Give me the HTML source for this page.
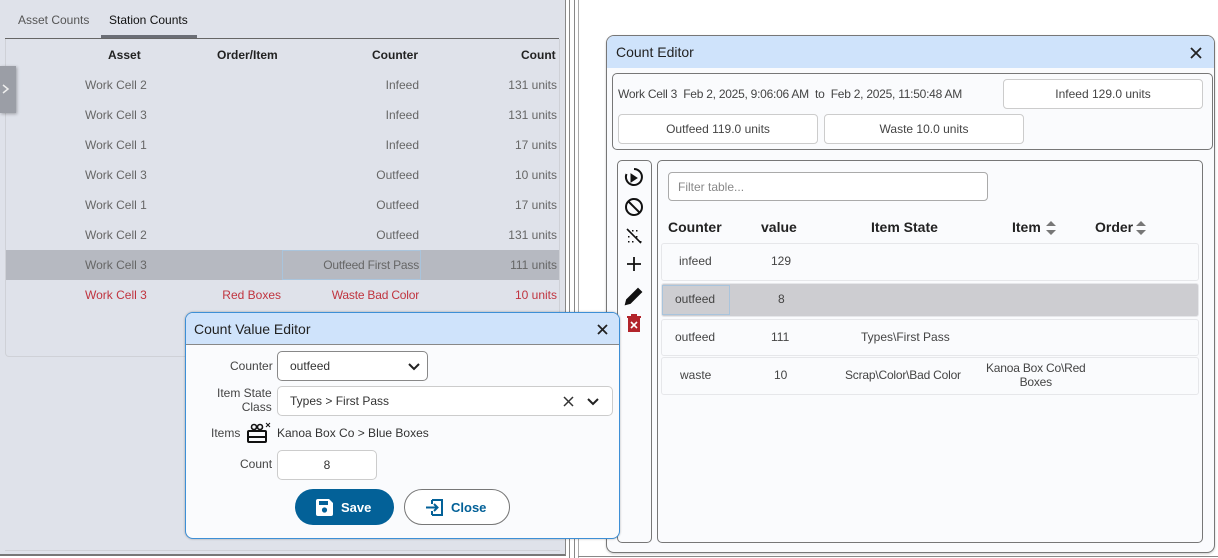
<!DOCTYPE html>
<html><head><style>
*{box-sizing:border-box;margin:0;padding:0}
body{width:1218px;height:558px;overflow:hidden;background:#fff;font-family:"Liberation Sans",sans-serif;font-size:12px;color:#444;position:relative}
.abs{position:absolute}
.left{left:0;top:0;width:566px;height:556px;background:#dfe2ea;border-right:1px solid #888;border-bottom:2px solid #777}
.tab{position:absolute;top:13px;font-size:12px}
.t{position:absolute;white-space:nowrap}
.r{position:absolute;white-space:nowrap;text-align:right}
.row{position:absolute;left:6px;width:553px;height:30px}
.hd{font-weight:bold;color:#222}
.dlg{position:absolute;background:#fafbfd;border-radius:8px;overflow:hidden}
.dh{position:absolute;left:0;right:0;top:0;background:#cfe3fb;font-size:14px;color:#222}
.box{position:absolute;border:1px solid #ccc;border-radius:4px;background:#fff}
.rrow{position:absolute;left:661px;width:538px;border:1px solid #e6e7ea;border-radius:3px;background:#fafbfd}
</style></head><body>
<div class="abs left">
 <div class="tab" style="left:18px;color:#555">Asset Counts</div>
 <div class="tab" style="left:109px;color:#111">Station Counts</div>
 <div class="abs" style="left:101px;top:35px;width:96px;height:3px;background:#6b6e76"></div>
 <div class="abs" style="left:5px;top:38px;width:554px;height:1px;background:#666"></div>
 <div class="abs" style="left:5px;top:39px;width:555px;height:318px;border:1px solid #cfd1d7;border-top:none;border-radius:0 0 4px 4px"></div>
 <div class="abs" style="left:5px;top:550px;width:555px;height:2px;border-top:1px solid #cfd1d7"></div>
 <div class="t hd" style="left:108px;top:48px">Asset</div>
 <div class="t hd" style="left:217px;top:48px">Order/Item</div>
 <div class="t hd" style="left:372px;top:48px">Counter</div>
 <div class="t hd" style="left:521px;top:48px">Count</div>
 <div class="abs" style="left:0;top:66px;width:16px;height:47px;background:#9b9ea6;box-shadow:1px 1px 3px rgba(0,0,0,.3)"><svg width="16" height="47"><path d="M3 19l5 4-5 4" stroke="#eee" stroke-width="1.5" fill="none"/></svg></div>
 <div class="row" style="top:250px;background:#b6b9c1"></div>
 <div class="abs" style="left:282px;top:250px;width:139px;height:30px;border:1px solid #a9c4dc"></div>
 <div style="color:#666">
 <div class="t" style="left:85px;top:78px">Work Cell 2</div><div class="r" style="right:146px;top:78px">Infeed</div><div class="r" style="right:8px;top:78px">131 units</div>
 <div class="t" style="left:85px;top:108px">Work Cell 3</div><div class="r" style="right:146px;top:108px">Infeed</div><div class="r" style="right:8px;top:108px">131 units</div>
 <div class="t" style="left:85px;top:138px">Work Cell 1</div><div class="r" style="right:146px;top:138px">Infeed</div><div class="r" style="right:8px;top:138px">17 units</div>
 <div class="t" style="left:85px;top:168px">Work Cell 3</div><div class="r" style="right:146px;top:168px">Outfeed</div><div class="r" style="right:8px;top:168px">10 units</div>
 <div class="t" style="left:85px;top:198px">Work Cell 1</div><div class="r" style="right:146px;top:198px">Outfeed</div><div class="r" style="right:8px;top:198px">17 units</div>
 <div class="t" style="left:85px;top:228px">Work Cell 2</div><div class="r" style="right:146px;top:228px">Outfeed</div><div class="r" style="right:8px;top:228px">131 units</div>
 <div class="t" style="left:85px;top:258px">Work Cell 3</div><div class="r" style="right:146px;top:258px;letter-spacing:-0.2px">Outfeed First Pass</div><div class="r" style="right:8px;top:258px">111 units</div>
 </div>
 <div style="color:#c0343f">
 <div class="t" style="left:85px;top:288px">Work Cell 3</div><div class="r" style="right:284px;top:288px">Red Boxes</div><div class="r" style="right:146px;top:288px;letter-spacing:-0.2px">Waste Bad Color</div><div class="r" style="right:8px;top:288px">10 units</div>
 </div>
</div>
<div class="abs" style="left:569px;top:0;width:1px;height:558px;background:#888"></div>
<div class="abs" style="left:574px;top:0;width:1px;height:558px;background:#888"></div>
<div class="abs" style="left:578px;top:0;width:1px;height:558px;background:#aaa"></div>
<div class="abs" style="left:578px;top:556px;width:640px;height:1px;background:#888"></div>

<div class="dlg" style="left:606px;top:35px;width:609px;height:518px;border:1px solid #777;box-shadow:0 1px 2px rgba(0,0,0,.2)">
 <div class="dh" style="height:32px"><span class="t" style="left:9px;top:8px">Count Editor</span>
 <svg class="abs" style="left:582px;top:10px" width="14" height="14"><path d="M2 2l10 10M12 2L2 12" stroke="#222" stroke-width="1.8"/></svg></div>
 <div class="abs" style="left:5px;top:37px;width:601px;height:77px;border:1px solid #777;border-radius:5px;background:#fafbfd"></div>
 <div class="t" style="left:11px;top:51px;color:#444;letter-spacing:-0.25px">Work Cell 3&nbsp; Feb 2, 2025, 9:06:06 AM&nbsp; to&nbsp; Feb 2, 2025, 11:50:48 AM</div>
 <div class="box" style="left:396px;top:43px;width:200px;height:30px;text-align:center;line-height:28px">Infeed 129.0 units</div>
 <div class="box" style="left:11px;top:78px;width:200px;height:30px;text-align:center;line-height:28px">Outfeed 119.0 units</div>
 <div class="box" style="left:217px;top:78px;width:200px;height:30px;text-align:center;line-height:28px">Waste 10.0 units</div>
 <div class="abs" style="left:10px;top:124px;width:35px;height:383px;border:1px solid #777;border-radius:5px"></div>
 <div class="abs" style="left:50px;top:124px;width:546px;height:383px;border:1px solid #777;border-radius:5px"></div>
</div>
<svg class="abs" style="left:620px;top:165px" width="28" height="170">
 <g fill="none" stroke="#111" stroke-width="2">
 <path d="M14 4a8 8 0 1 1-7.5 5"/><path d="M11 9v8l6-4z" fill="#111" stroke-width="1"/>
 <circle cx="14" cy="42" r="8"/><path d="M8.5 36.5l11 11"/>
 <path d="M7 64l14 14" stroke-width="1.6"/>
 <path d="M14 92v14M7 99h14" stroke-width="1.8"/>
 <path d="M7 135l11-11 3 3-11 11-4 1z" fill="#111"/>
 </g>
 <g fill="#111"><rect x="8" y="65" width="1.5" height="1.5"/><rect x="12" y="65" width="1.5" height="1.5"/><rect x="16" y="65" width="1.5" height="1.5"/><rect x="8" y="71" width="1.5" height="1.5"/><rect x="16" y="71" width="1.5" height="1.5"/><rect x="8" y="76" width="1.5" height="1.5"/><rect x="12" y="76" width="1.5" height="1.5"/><rect x="20" y="76" width="1.5" height="1.5"/></g>
 <rect x="8" y="153" width="12" height="14" fill="#b2242b"/><rect x="7" y="151" width="14" height="2" fill="#b2242b"/><rect x="11" y="149" width="6" height="2" fill="#b2242b"/>
 <path d="M11 157l6 6M17 157l-6 6" stroke="#fff" stroke-width="1.6"/>
</svg>
<div class="abs" style="left:668px;top:172px;width:320px;height:29px;border:1px solid #aaa;border-radius:4px;background:#fff"><span class="t" style="left:9px;top:7px;color:#888">Filter table...</span></div>
<div style="font-size:14px;font-weight:bold;color:#222">
 <div class="t" style="left:668px;top:219px">Counter</div>
 <div class="t" style="left:761px;top:219px">value</div>
 <div class="t" style="left:871px;top:219px">Item State</div>
 <div class="t" style="left:1012px;top:219px">Item</div>
 <div class="t" style="left:1095px;top:219px">Order</div>
</div>
<svg class="abs" style="left:1045px;top:219px" width="12" height="18"><path d="M1 7l5-5 5 5zM1 11l5 5 5-5z" fill="#777"/></svg>
<svg class="abs" style="left:1135px;top:219px" width="12" height="18"><path d="M1 7l5-5 5 5zM1 11l5 5 5-5z" fill="#777"/></svg>
<div class="rrow" style="top:243px;height:38px"></div>
<div class="rrow" style="top:283px;height:34px;background:#cdcdd1;border-color:#e6e7ea"></div>
<div class="abs" style="left:662px;top:285px;width:68px;height:30px;border:1px solid #a9c4dc"></div>
<div class="rrow" style="top:319px;height:37px"></div>
<div class="rrow" style="top:357px;height:38px"></div>
<div style="color:#444">
 <div class="t" style="left:679px;top:254px">infeed</div><div class="t" style="left:771px;top:254px">129</div>
 <div class="t" style="left:675px;top:292px">outfeed</div><div class="t" style="left:778px;top:292px">8</div>
 <div class="t" style="left:675px;top:330px">outfeed</div><div class="t" style="left:771px;top:330px">111</div><div class="t" style="left:861px;top:330px">Types\First Pass</div>
 <div class="t" style="left:845px;top:368px;letter-spacing:-0.2px">Scrap\Color\Bad Color</div><div class="t" style="left:680px;top:368px">waste</div><div class="t" style="left:774px;top:368px">10</div>
 <div class="t" style="left:986px;top:361px;text-align:center;line-height:14px;letter-spacing:-0.2px">Kanoa Box Co\Red<br>Boxes</div>
</div>

<div class="dlg" style="left:185px;top:312px;width:435px;height:227px;border:1px solid #3d8fd6;box-shadow:0 0 2px rgba(0,0,0,.3)">
 <div class="dh" style="height:32px;border-bottom:1px solid #888"><span class="t" style="left:8px;top:8px">Count Value Editor</span>
 <svg class="abs" style="left:410px;top:10px" width="13" height="13"><path d="M2 2l9 9M11 2l-9 9" stroke="#222" stroke-width="1.8"/></svg></div>
 <div class="t" style="left:44px;top:46px">Counter</div>
 <div class="box" style="left:91px;top:38px;width:151px;height:30px;border-color:#888;border-radius:5px"><span class="t" style="left:12px;top:7px;color:#333">outfeed</span>
 <svg class="abs" style="left:130px;top:10px" width="12" height="9"><path d="M1 2l5 5 5-5" stroke="#222" stroke-width="2" fill="none"/></svg></div>
 <div class="t" style="left:31px;top:73px;text-align:right;line-height:14px">Item State<br>&nbsp;&nbsp;&nbsp;&nbsp;Class</div>
 <div class="box" style="left:91px;top:73px;width:336px;height:30px;border-radius:5px"><span class="t" style="left:12px;top:7px;color:#333">Types &gt; First Pass</span>
 <svg class="abs" style="left:284px;top:9px" width="40" height="12"><path d="M2 1l9 9M11 1l-9 9" stroke="#333" stroke-width="1.5"/><path d="M26 3l5 5 5-5" stroke="#222" stroke-width="2" fill="none"/></svg></div>
 <div class="t" style="left:25px;top:113px">Items</div>
 <svg class="abs" style="left:60px;top:109px" width="26" height="22"><rect x="2" y="9" width="18" height="11" rx="1" fill="none" stroke="#111" stroke-width="2"/><path d="M2 15h18" stroke="#111" stroke-width="2"/><circle cx="8" cy="5" r="2.5" fill="none" stroke="#111" stroke-width="1.6"/><circle cx="14" cy="5" r="2.5" fill="none" stroke="#111" stroke-width="1.6"/><path d="M20 1l4 4M24 1l-4 4" stroke="#111" stroke-width="1"/></svg>
 <div class="t" style="left:91px;top:113px;color:#333">Kanoa Box Co &gt; Blue Boxes</div>
 <div class="t" style="left:54px;top:144px">Count</div>
 <div class="box" style="left:91px;top:137px;width:100px;height:30px;border-radius:5px;text-align:center;line-height:28px;color:#333">8</div>
 <div class="abs" style="left:109px;top:176px;width:99px;height:36px;background:#036198;border-radius:18px;color:#fff;font-weight:bold;font-size:13px">
  <svg class="abs" style="left:21px;top:10px" width="18" height="17"><path d="M0 2a2 2 0 0 1 2-2h11l4 4v11a2 2 0 0 1-2 2H2a2 2 0 0 1-2-2z" fill="#fff"/><rect x="3" y="2" width="9" height="4" fill="#036198"/><circle cx="8.5" cy="11" r="2.6" fill="#036198"/></svg>
  <span class="t" style="left:46px;top:11px">Save</span></div>
 <div class="abs" style="left:218px;top:176px;width:106px;height:36px;border:1px solid #777;border-radius:18px;color:#036198;font-weight:bold;font-size:13px;background:#fff">
  <svg class="abs" style="left:21px;top:9px" width="18" height="17"><path d="M6 1h10v15H6M6 1v4M6 12v4" stroke="#036198" stroke-width="2" fill="none"/><path d="M0 8.5h11M8 5l3.5 3.5L8 12" stroke="#036198" stroke-width="2" fill="none"/></svg>
  <span class="t" style="left:46px;top:10px">Close</span></div>
</div>
</body></html>
